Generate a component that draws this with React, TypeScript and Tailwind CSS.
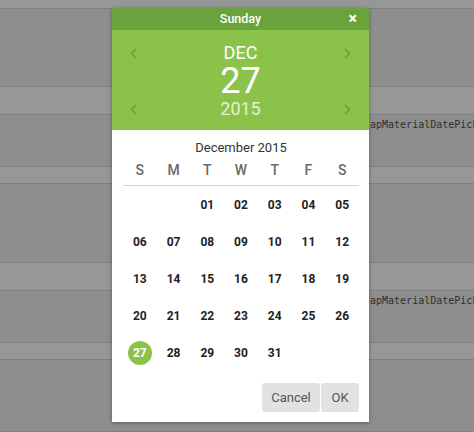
import React from "react";

const weekdays = ["S", "M", "T", "W", "T", "F", "S"];
const weeks: (string | null)[][] = [
  [null, null, "01", "02", "03", "04", "05"],
  ["06", "07", "08", "09", "10", "11", "12"],
  ["13", "14", "15", "16", "17", "18", "19"],
  ["20", "21", "22", "23", "24", "25", "26"],
  ["27", "28", "29", "30", "31", null, null],
];

function Chevron({ dir }: { dir: "left" | "right" }) {
  return (
    <svg width="7" height="11" viewBox="0 0 7 11" fill="none">
      <path
        d={dir === "left" ? "M6 1L1.5 5.5L6 10" : "M1 1L5.5 5.5L1 10"}
        stroke="#6c9f3c"
        strokeWidth="1.6"
      />
    </svg>
  );
}

export default function App() {
  const rows = [
    { h: "h-[9px]", c: "bg-[#979797]", text: false },
    { h: "h-[78px]", c: "bg-[#8e8e8e]", text: false },
    { h: "h-[28px]", c: "bg-[#979797]", text: false },
    { h: "h-[52px]", c: "bg-[#8e8e8e]", text: true },
    { h: "h-[17px]", c: "bg-[#979797]", text: false },
    { h: "h-[79px]", c: "bg-[#8e8e8e]", text: false },
    { h: "h-[28px]", c: "bg-[#979797]", text: false },
    { h: "h-[52px]", c: "bg-[#8e8e8e]", text: true },
    { h: "h-[17px]", c: "bg-[#979797]", text: false },
    { h: "h-[72px]", c: "bg-[#8e8e8e]", text: false },
  ];
  return (
    <div
      className="relative w-[474px] h-[432px] overflow-hidden bg-[#8e8e8e]"
      style={{ fontFamily: "Roboto, 'Liberation Sans', sans-serif" }}
    >
      <div className="flex flex-col">
        {rows.map((r, i) => (
          <div
            key={i}
            className={`${r.h} ${r.c} border-b border-[#7f7f7f] overflow-hidden whitespace-nowrap`}
          >
            {r.text && (
              <div
                className="pl-[370px] pt-[3px] text-[10px] leading-[14px] text-[#2e2e2e] overflow-hidden"
                style={{ fontFamily: "'DejaVu Sans Mono', 'Liberation Mono', monospace" }}
              >
                apMaterialDatePick
              </div>
            )}
          </div>
        ))}
      </div>

      <div className="absolute left-[112px] top-[8px] w-[257px] bg-white shadow-[0_1px_4px_rgba(0,0,0,0.35)]">
        <div className="relative h-[22px] bg-[#6aa33b] flex items-center justify-center">
          <span className="text-[12.5px] font-medium text-white">Sunday</span>
          <span className="absolute right-[12px] top-[2px] text-[16px] leading-[18px] font-bold text-white">
            ×
          </span>
        </div>
        <div className="h-[100px] bg-[#8bc34a] pt-[13px]">
          <div className="flex items-center justify-between h-[20px] px-[18px]">
            <Chevron dir="left" />
            <span className="text-[18px] leading-[20px] text-white">DEC</span>
            <Chevron dir="right" />
          </div>
          <div className="flex justify-center items-center h-[36px]">
            <span className="text-[36px] leading-[32px] text-white">27</span>
          </div>
          <div className="flex items-center justify-between h-[20px] px-[18px]">
            <Chevron dir="left" />
            <span className="text-[18px] leading-[20px] text-[#e3f1d3]">2015</span>
            <Chevron dir="right" />
          </div>
        </div>
        <div className="pt-[10px] pl-[11px] pr-[10px] pb-[10px]">
          <div className="text-center text-[13px] leading-[16px] text-[#333]">December 2015</div>
          <div className="grid grid-cols-7 h-[30px] items-center border-b border-[#d4d4d4]">
            {weekdays.map((d, i) => (
              <div key={i} className="text-center text-[14px] font-medium text-[#6a6a6a]">
                {d}
              </div>
            ))}
          </div>
          <div className="flex flex-col">
            {weeks.map((w, i) => (
              <div key={i} className="grid grid-cols-7 h-[37px] items-center">
                {w.map((d, j) => (
                  <div key={j} className="flex justify-center">
                    {d &&
                      (d === "27" ? (
                        <span className="w-[24px] h-[24px] rounded-full bg-[#8bc34a] flex items-center justify-center text-[12px] font-bold text-white">
                          {d}
                        </span>
                      ) : (
                        <span className="text-[12px] font-bold text-[#222]">{d}</span>
                      ))}
                  </div>
                ))}
              </div>
            ))}
          </div>
          <div className="flex justify-end gap-[1px] mt-[12px]">
            <button className="w-[58px] h-[29px] rounded-[3px] bg-[#e2e2e2] text-[13px] text-[#555]">
              Cancel
            </button>
            <button className="w-[38px] h-[29px] rounded-[3px] bg-[#e2e2e2] text-[13px] text-[#555]">
              OK
            </button>
          </div>
        </div>
      </div>
    </div>
  );
}
